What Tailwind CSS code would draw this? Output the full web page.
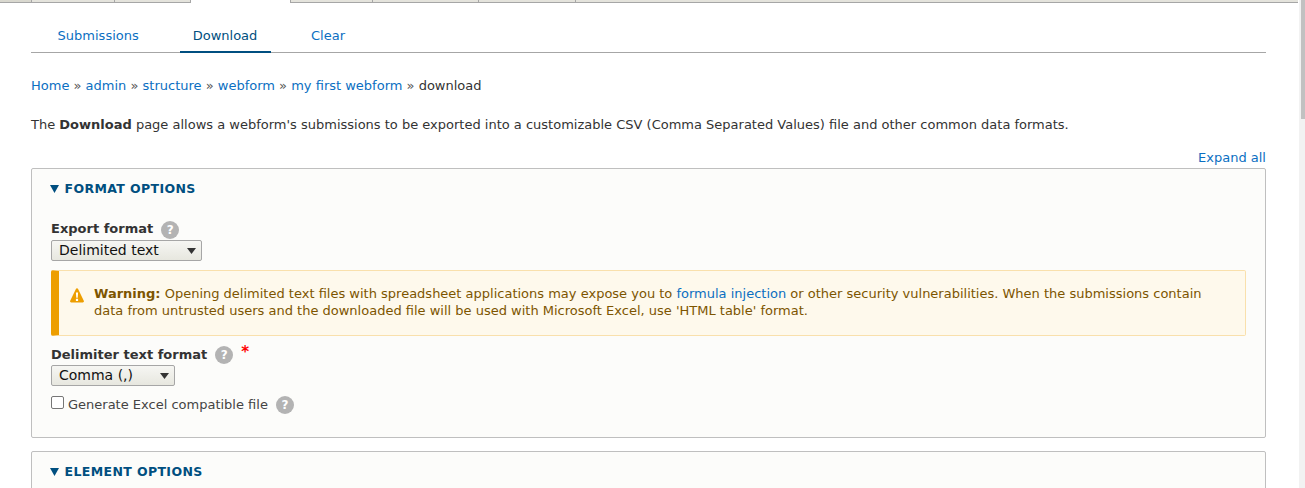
<!DOCTYPE html>
<html lang="en">
<head>
    <meta charset="UTF-8">
    <title>Download | my first webform</title>
    <script src="https://cdn.jsdelivr.net/npm/@tailwindcss/browser@4"></script>
</head>
<body class="bg-white h-[488px] overflow-hidden font-['DejaVu_Sans',sans-serif] text-[13px] text-[#333] relative">
    <!-- top tabs strip -->
    <div class="flex h-[3px] w-[1298px]">
        <div class="w-[32px] bg-[#d9d8cf] border-r border-b border-[#a6a6a6]"></div>
        <div class="w-[83px] bg-[#e4e3dc] border-r border-b border-[#a6a6a6]"></div>
        <div class="w-[76px] bg-[#e4e3dc] border-r border-b border-[#a6a6a6]"></div>
        <div class="w-[100px] bg-white border-r border-[#a6a6a6]"></div>
        <div class="w-[82px] bg-[#e4e3dc] border-r border-b border-[#a6a6a6]"></div>
        <div class="w-[106px] bg-[#e4e3dc] border-r border-b border-[#a6a6a6]"></div>
        <div class="w-[97px] bg-[#e4e3dc] border-r border-b border-[#a6a6a6]"></div>
        <div class="flex-1 bg-[#e4e3dc] border-b border-[#a6a6a6]"></div>
    </div>

    <main class="px-[31px] w-[1297px]">
        <nav class="flex h-[50px] border-b border-[#a6a6a6] text-[#0b6fc2]">
            <a class="w-[149px] pl-[26.6px] pt-[23px]">Submissions</a>
            <a class="w-[91px] h-[50px] pt-[23px] pr-[1px] text-center text-[#004f80] border-b-2 border-[#004f80]">Download</a>
            <a class="pl-[40px] pt-[23px]">Clear</a>
        </nav>

        <div class="mt-[25px] h-[16px] leading-[16px] text-[#555]"><a class="text-[#0b6fc2]">Home</a> » <a class="text-[#0b6fc2]">admin</a> » <a class="text-[#0b6fc2]">structure</a> » <a class="text-[#0b6fc2]">webform</a> » <a class="text-[#0b6fc2]">my first webform</a> » <span class="text-[#333]">download</span></div>

        <p class="mt-[23px] h-[16px] leading-[16px]">The <b>Download</b> page allows a webform's submissions to be exported into a customizable CSV (Comma Separated Values) file and other common data formats.</p>

        <div class="mt-[17px] h-[16px] leading-[16px] text-right text-[#0b6fc2]">Expand all</div>

        <section class="mt-[2px] h-[270px] bg-[#fcfcfa] border border-[#bfbfbf] rounded-[2px] px-[19px]">
            <h2 class="flex items-center gap-[5.5px] mt-[12px] ml-[-1px] h-[16px] font-bold text-[12.5px] text-[#004f80] tracking-[0.38px]">
                <svg width="9" height="8" viewBox="0 0 9 8"><path d="M0 0h9L4.500 8z" fill="#004f80"/></svg>
                FORMAT OPTIONS
            </h2>

            <div class="mt-[24px] flex items-center h-[18px] font-bold"><span class="mb-[2px]">Export format</span>
                <span class="ml-[8px] w-[18px] h-[18px] rounded-full bg-[#b3b3b3] text-white text-[12px] text-center leading-[18px]">?</span>
            </div>
            <div class="mt-[1px] w-[151px] h-[21px] flex items-center justify-between pl-[7px] pr-[5px] border border-[#a6a6a6] rounded-[2px] bg-linear-to-b from-[#f6f6f3] to-[#e7e7df] text-[14px] text-[#111]">
                Delimited text
                <svg width="9" height="6" viewBox="0 0 9 6"><path d="M0 0h9L4.500 6z" fill="#333"/></svg>
            </div>

            <div class="mt-[9px] h-[66px] flex gap-[10px] pl-[11px] pt-[14px] bg-[#fef9ec] border border-[#f9e0ac] border-l-[8px] border-l-[#ed9e00] rounded-[2px] text-[#7d5500] leading-[17px]">
                <svg class="mt-[3px] shrink-0" width="14" height="15" viewBox="0 0 14 15"><path d="M7 0.300c.5 0 .9.300 1.100.700l5.700 11.800c.4.800-.1 1.700-1 1.700H1.200c-.9 0-1.400-.9-1-1.700L5.900 1c.2-.4.600-.7 1.100-.7z" fill="#ed9e00"/><path d="M5.900 4.500h2.200l-.4 5.200H6.300zM5.900 10.700h2.200v2.200H5.900z" fill="#fff"/></svg>
                <p class="w-[1120px]"><b>Warning:</b> Opening delimited text files with spreadsheet applications may expose you to <a class="text-[#0b6fc2]">formula injection</a> or other security vulnerabilities. When the submissions contain data from untrusted users and the downloaded file will be used with Microsoft Excel, use 'HTML table' format.</p>
            </div>

            <div class="mt-[10px] flex items-center h-[18px] font-bold"><span class="mb-[1px]">Delimiter text format</span>
                <span class="ml-[8px] w-[18px] h-[18px] rounded-full bg-[#b3b3b3] text-white text-[12px] text-center leading-[18px]">?</span>
                <span class="ml-[8px] mb-[5px] text-[#f00] text-[15px]">*</span>
            </div>
            <div class="mt-[1px] w-[124px] h-[21px] flex items-center justify-between pl-[7px] pr-[5px] border border-[#a6a6a6] rounded-[2px] bg-linear-to-b from-[#f6f6f3] to-[#e7e7df] text-[14px] text-[#111]">
                Comma (,)
                <svg width="9" height="6" viewBox="0 0 9 6"><path d="M0 0h9L4.500 6z" fill="#333"/></svg>
            </div>

            <div class="mt-[10px] flex items-center h-[18px]">
                <input type="checkbox" class="appearance-none self-start w-[13px] h-[13px] border border-[#767676] rounded-[2px] bg-white">
                <span class="ml-[4px] mb-[1px] text-[#444]">Generate Excel compatible file</span>
                <span class="ml-[8px] w-[18px] h-[18px] rounded-full bg-[#b3b3b3] text-white text-[12px] font-bold text-center leading-[18px]">?</span>
            </div>
        </section>

        <section class="mt-[13px] h-[60px] bg-[#fcfcfa] border border-[#bfbfbf] rounded-[2px] px-[19px]">
            <h2 class="flex items-center gap-[5.5px] mt-[12px] ml-[-1px] h-[16px] font-bold text-[12.5px] text-[#004f80] tracking-[0.38px]">
                <svg width="9" height="8" viewBox="0 0 9 8"><path d="M0 0h9L4.500 8z" fill="#004f80"/></svg>
                ELEMENT OPTIONS
            </h2>
        </section>
    </main>

    <!-- scrollbar -->
    <div class="absolute top-0 right-0 w-[6px] h-full bg-[#f2f2f2]">
        <div class="ml-auto w-[4px] h-[119px] bg-[#c1c1c1]"></div>
    </div>
</body>
</html>
